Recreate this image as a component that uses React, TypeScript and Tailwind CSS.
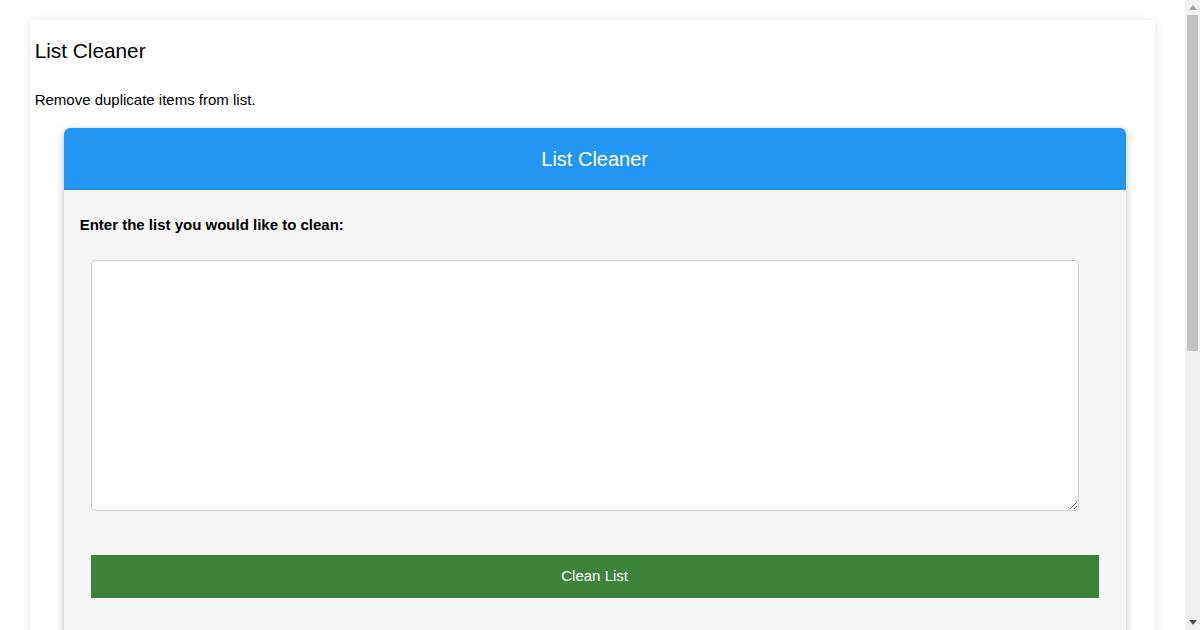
export default function App() {
  return (
    <div className="flex h-[630px] w-[1200px] overflow-hidden bg-white" style={{ fontFamily: '"Liberation Sans", Arial, sans-serif' }}>
      <div className="w-[1185px] h-[630px] overflow-hidden">
        <div className="pt-5 pb-[40px]">
          <div className="mx-auto w-[95%] bg-white p-[5px] shadow-[0_0_8px_rgba(0,0,0,0.12)] h-[1070px]">
            <h1 className="text-[20.8px] leading-[24px] mt-[14px] text-black">List Cleaner</h1>
            <p className="text-[15px] leading-[18px] mt-[28px] text-black">Remove duplicate items from list.</p>
            <div className="ml-[29px] mt-[19px] w-[1062px] rounded-[6px] bg-[#f6f6f6] shadow-[0_2px_8px_rgba(0,0,0,0.25)] pb-[300px]">
              <div className="h-[62px] rounded-t-[6px] bg-[#2196f3] flex items-center justify-center">
                <span className="text-white text-[20px]">List Cleaner</span>
              </div>
              <div className="px-4 pt-[26px]">
                <label className="block text-[15px] font-bold text-black leading-[18px]">Enter the list you would like to clean:</label>
                <textarea className="block ml-[11px] mt-[26px] w-[988px] h-[251px] rounded-[4px] border border-[#cccccc] bg-white resize-y outline-none" />
                <button className="block ml-[11px] mt-[44px] w-[1008px] h-[43px] bg-[#3b8339] text-white text-[15px]">Clean List</button>
              </div>
            </div>
          </div>
        </div>
      </div>
      <div className="w-[15px] h-[630px] bg-[#f1f1f1] flex flex-col items-center">
        <div className="h-[15px] w-full flex items-center justify-center">
          <svg width="8" height="5" viewBox="0 0 8 5"><polygon points="4,0 8,5 0,5" fill="#a3a3a3" /></svg>
        </div>
        <div className="w-[11px] h-[336px] bg-[#c1c1c1]" />
        <div className="flex-1" />
        <div className="h-[15px] w-full flex items-center justify-center">
          <svg width="8" height="5" viewBox="0 0 8 5"><polygon points="0,0 8,0 4,5" fill="#505050" /></svg>
        </div>
      </div>
    </div>
  );
}
